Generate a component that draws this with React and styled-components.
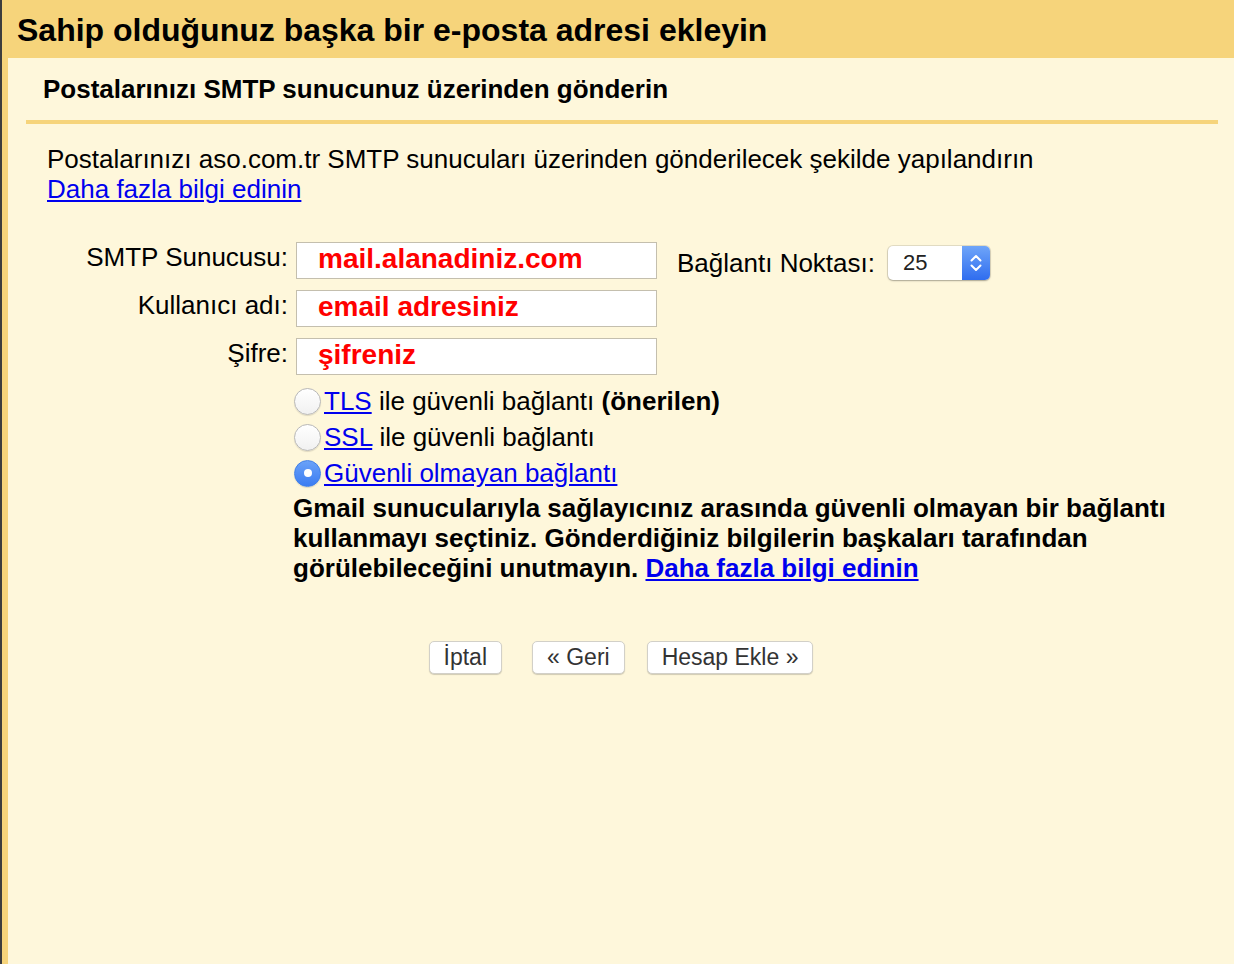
import React from "react";
import styled, { createGlobalStyle } from "styled-components";

const GlobalStyle = createGlobalStyle`
  html, body {
    margin: 0;
    padding: 0;
    background: #fef7db;
  }
  body {
    font-family: "Liberation Sans", Arial, "DejaVu Sans", sans-serif;
    color: #000;
  }
`;

const YELLOW = "#f6d47b";

const App = () => {
  return (
    <>
      <GlobalStyle />
      <Page>
        <Header>
          <Title>Sahip olduğunuz başka bir e-posta adresi ekleyin</Title>
        </Header>
        <Body>
          <Section>
            <SubTitle>Postalarınızı SMTP sunucunuz üzerinden gönderin</SubTitle>
            <Separator />
            <Intro>
              Postalarınızı aso.com.tr SMTP sunucuları üzerinden gönderilecek şekilde yapılandırın
              <br />
              <Link href="#">Daha fazla bilgi edinin</Link>
            </Intro>

            <Form>
              <FormRow>
                <Label>SMTP Sunucusu:</Label>
                <TextInput readOnly defaultValue="mail.alanadiniz.com" />
                <PortLabel>Bağlantı Noktası:</PortLabel>
                <Select>
                  <SelectValue>25</SelectValue>
                  <SelectArrow>
                    <svg width="14" height="24" viewBox="0 0 14 24" fill="none">
                      <path d="M2.5 9.5 L7 5 L11.5 9.5" stroke="#fff" strokeWidth="2" strokeLinecap="round" strokeLinejoin="round" />
                      <path d="M2.5 14.5 L7 19 L11.5 14.5" stroke="#fff" strokeWidth="2" strokeLinecap="round" strokeLinejoin="round" />
                    </svg>
                  </SelectArrow>
                </Select>
              </FormRow>
              <FormRow>
                <Label>Kullanıcı adı:</Label>
                <TextInput readOnly defaultValue="email adresiniz" />
              </FormRow>
              <FormRow>
                <Label>Şifre:</Label>
                <TextInput readOnly defaultValue="şifreniz" />
              </FormRow>
            </Form>

            <Radios>
              <RadioRow>
                <Radio />
                <span>
                  <Link href="#">TLS</Link> ile güvenli bağlantı <b>(önerilen)</b>
                </span>
              </RadioRow>
              <RadioRow>
                <Radio />
                <span>
                  <Link href="#">SSL</Link> ile güvenli bağlantı
                </span>
              </RadioRow>
              <RadioRow>
                <Radio checked />
                <Link href="#">Güvenli olmayan bağlantı</Link>
              </RadioRow>
            </Radios>

            <Warning>
              Gmail sunucularıyla sağlayıcınız arasında güvenli olmayan bir bağlantı
              kullanmayı seçtiniz. Gönderdiğiniz bilgilerin başkaları tarafından
              görülebileceğini unutmayın. <Link href="#">Daha fazla bilgi edinin</Link>
            </Warning>
          </Section>

          <Buttons>
            <Button $spaced>İptal</Button>
            <Button>« Geri</Button>
            <Button>Hesap Ekle »</Button>
          </Buttons>
        </Body>
      </Page>
    </>
  );
};

export default App;

const Page = styled.div`
  min-height: 964px;
  border-left: 2px solid #3d3d3d;
  background: #fef7db;
  display: flex;
  flex-direction: column;
`;

const Header = styled.div`
  height: 58px;
  background: ${YELLOW};
  display: flex;
  align-items: center;
  padding-left: 15px;
`;

const Title = styled.h1`
  margin: 0;
  font-size: 32px;
  font-weight: bold;
  line-height: 36px;
  padding-top: 2px;
`;

const Body = styled.div`
  flex: 1;
  border-left: 6px solid ${YELLOW};
  display: flex;
  flex-direction: column;
`;

const Section = styled.div`
  margin: 0 16px 0 18px;
`;

const SubTitle = styled.h2`
  margin: 0;
  padding: 16px 0 0 17px;
  font-size: 26px;
  line-height: 30px;
  font-weight: bold;
`;

const Separator = styled.div`
  height: 4px;
  background: ${YELLOW};
  margin-top: 16px;
`;

const Intro = styled.p`
  margin: 20px 0 0 21px;
  font-size: 26px;
  line-height: 30px;
`;

const Link = styled.a`
  color: #0000ee;
  text-decoration: underline;
  text-underline-offset: 2px;
`;

const Form = styled.div`
  margin-top: 38px;
  display: flex;
  flex-direction: column;
  gap: 11px;
`;

const FormRow = styled.div`
  display: flex;
  align-items: center;
  height: 37px;
`;

const Label = styled.div`
  width: 262px;
  text-align: right;
  font-size: 26px;
  line-height: 30px;
  padding-bottom: 7px;
  margin-right: 8px;
`;

const TextInput = styled.input`
  box-sizing: border-box;
  width: 361px;
  height: 37px;
  border: 1px solid #c4bfae;
  border-radius: 0;
  background: #fff;
  padding: 0 0 3px 21px;
  font-family: "Liberation Sans", Arial, sans-serif;
  font-size: 28px;
  font-weight: bold;
  color: #ff0000;
  outline: none;
`;

const PortLabel = styled.div`
  margin-left: 20px;
  font-size: 26px;
  line-height: 30px;
  margin-top: 4px;
`;

const Select = styled.div`
  margin-left: 13px;
  margin-top: 4px;
  width: 102px;
  height: 34px;
  border-radius: 5px;
  background: #fff;
  box-shadow: 0 0 0 1px rgba(0, 0, 0, 0.1), 0 1px 2px rgba(0, 0, 0, 0.25);
  display: flex;
  overflow: hidden;
`;

const SelectValue = styled.div`
  flex: 1;
  display: flex;
  align-items: center;
  padding-left: 15px;
  font-size: 22px;
  color: #222;
`;

const SelectArrow = styled.div`
  width: 28px;
  display: flex;
  align-items: center;
  justify-content: center;
  background: linear-gradient(#6fa5f9, #2f6def);
`;

const Radios = styled.div`
  margin: 8px 0 0 268px;
  display: flex;
  flex-direction: column;
`;

const RadioRow = styled.div`
  height: 36px;
  display: flex;
  align-items: center;
  gap: 3px;
  font-size: 26px;
  line-height: 30px;
`;

const Radio = styled.span`
  box-sizing: border-box;
  width: 27px;
  height: 27px;
  flex: 0 0 27px;
  border-radius: 50%;
  position: relative;
  background: ${(p) =>
    p.checked
      ? "linear-gradient(#6aa2f8, #3b7cf2)"
      : "linear-gradient(#ffffff, #f1f1f1)"};
  border: 1px solid ${(p) => (p.checked ? "#3f7fe8" : "#b8b8b8")};
  box-shadow: 0 1px 1px rgba(0, 0, 0, 0.12);
  &::after {
    content: "";
    display: ${(p) => (p.checked ? "block" : "none")};
    position: absolute;
    left: 50%;
    top: 50%;
    width: 8px;
    height: 8px;
    margin: -4px 0 0 -4px;
    border-radius: 50%;
    background: #fff;
  }
`;

const Warning = styled.p`
  margin: 2px 0 0 267px;
  max-width: 920px;
  font-size: 26px;
  line-height: 30px;
  font-weight: bold;
`;

const Buttons = styled.div`
  margin-top: 58px;
  display: flex;
  justify-content: center;
  gap: 22px;
`;

const Button = styled.button`
  height: 33px;
  padding: 0 14px;
  margin-right: ${(p) => (p.$spaced ? "8px" : "0")};
  background: #fff;
  border: 1px solid #d2d0c8;
  border-radius: 5px;
  box-shadow: 0 1px 1px rgba(0, 0, 0, 0.18);
  font-family: "Liberation Sans", Arial, sans-serif;
  font-size: 23px;
  color: #333;
  cursor: pointer;
`;
